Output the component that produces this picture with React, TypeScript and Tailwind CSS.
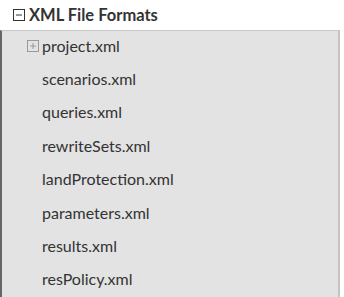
import React from "react";

const items = [
  "project.xml",
  "scenarios.xml",
  "queries.xml",
  "rewriteSets.xml",
  "landProtection.xml",
  "parameters.xml",
  "results.xml",
  "resPolicy.xml",
];

function BoxIcon({ plus, color, size }: { plus?: boolean; color: string; size: number }) {
  const m = size / 2;
  return (
    <svg width={size} height={size} viewBox={`0 0 ${size} ${size}`} className="shrink-0">
      <rect x="0.5" y="0.5" width={size - 1} height={size - 1} fill="none" stroke={color} strokeWidth="1" />
      <line x1="3" y1={m} x2={size - 3} y2={m} stroke={color} strokeWidth="1" />
      {plus && <line x1={m} y1="3" x2={m} y2={size - 3} stroke={color} strokeWidth="1" />}
    </svg>
  );
}

export default function App() {
  return (
    <div className="w-[344px] h-[297px] bg-white overflow-hidden" style={{ fontFamily: "Lato, 'Noto Sans', sans-serif" }}>
      <div className="h-[30px] flex items-center pl-[13px] gap-[4px]">
        <BoxIcon color="#333" size={12} />
        <span className="text-[16.5px] font-bold text-[#333] leading-none">XML File Formats</span>
      </div>
      <div className="w-[340px] h-[267px] bg-[#e3e3e3] border-t border-t-[#c8c8c8] border-r-2 border-r-[#c4c4c4] border-l-2 border-l-[#666]">
        <div className="-mt-[2px]">
          {items.map((it, i) => (
            <div key={it} className="h-[33.4px] flex items-center">
              <div className="w-[40px] flex justify-end pr-[3px]">
                {i === 0 && <BoxIcon plus color="#999" size={12} />}
              </div>
              <span className="text-[16px] text-[#333] leading-none">{it}</span>
            </div>
          ))}
        </div>
      </div>
    </div>
  );
}
